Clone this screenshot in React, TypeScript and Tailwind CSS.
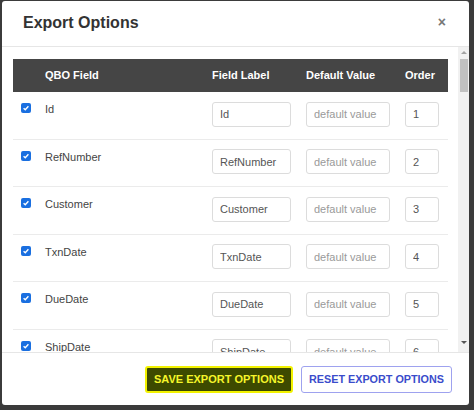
import React from "react";

type Field = { name: string; order: number };

const fields: Field[] = [
  { name: "Id", order: 1 },
  { name: "RefNumber", order: 2 },
  { name: "Customer", order: 3 },
  { name: "TxnDate", order: 4 },
  { name: "DueDate", order: 5 },
  { name: "ShipDate", order: 6 },
];

function Check() {
  return (
    <span className="mt-[2px] flex h-[10px] w-[10px] items-center justify-center rounded-[2px] bg-[#1a6fe0]">
      <svg viewBox="0 0 10 10" className="h-[8px] w-[8px]">
        <path d="M2 5.2 L4.1 7.2 L8 2.8" fill="none" stroke="white" strokeWidth="1.7" />
      </svg>
    </span>
  );
}

function FieldRow({ field }: { field: Field }) {
  return (
    <div className="grid h-[47.6px] shrink-0 grid-cols-[32px_167px_94px_99px_42px] border-b border-[#ebebeb] pt-[9px]">
      <div className="pl-[8px]">
        <Check />
      </div>
      <div className="pt-[1px] text-[11px] leading-[14px] text-[#444]">{field.name}</div>
      <div>
        <input
          readOnly
          value={field.name}
          className="h-[25px] w-[79px] rounded-[3px] border border-[#dcdcdc] px-[7px] text-[11px] text-[#555] outline-none"
        />
      </div>
      <div>
        <input
          readOnly
          placeholder="default value"
          className="h-[25px] w-[84px] rounded-[3px] border border-[#dcdcdc] px-[7px] text-[11px] text-[#555] outline-none placeholder:text-[#9a9a9a]"
        />
      </div>
      <div>
        <input
          readOnly
          value={field.order}
          className="h-[25px] w-[34px] rounded-[3px] border border-[#dcdcdc] px-[7px] text-[11px] text-[#555] outline-none"
        />
      </div>
    </div>
  );
}

export default function App() {
  return (
    <div
      className="h-[410px] w-[474px] overflow-hidden bg-[#3b3b3b] pl-[2px] pt-[1px]"
      style={{ fontFamily: '"Liberation Sans", Arial, sans-serif' }}
    >
      <div className="flex h-[404px] w-[467px] flex-col overflow-hidden rounded-[3px] bg-white">
        {/* header */}
        <div className="flex h-[46px] shrink-0 items-center justify-between border-b border-[#e6e6e6] pl-[21px] pr-[23px]">
          <h1 className="pb-[2px] text-[16px] font-bold text-[#333]">Export Options</h1>
          <span className="pb-[3px] text-[14px] font-bold leading-none text-[#777]">×</span>
        </div>

        {/* scrolling body */}
        <div className="flex min-h-0 flex-1">
          <div className="flex min-w-0 flex-1 flex-col overflow-hidden pl-[11px] pr-[10px] pt-[12px]">
            <div className="grid h-[33px] shrink-0 grid-cols-[32px_167px_94px_99px_42px] items-center bg-[#454545] text-[11px] font-bold text-white">
              <div />
              <div>QBO Field</div>
              <div>Field Label</div>
              <div>Default Value</div>
              <div>Order</div>
            </div>
            {fields.map((f) => (
              <FieldRow key={f.name} field={f} />
            ))}
          </div>
          <div className="flex w-[11px] shrink-0 flex-col items-center bg-[#f1f1f1] pt-[4px]">
            <span className="h-0 w-0 border-x-[3px] border-b-[3px] border-x-transparent border-b-[#a3a3a3]" />
            <div className="mt-[5px] h-[33px] w-[8px] bg-[#c1c1c1]" />
            <div className="flex-1" />
            <span className="mb-[8px] h-0 w-0 border-x-[3px] border-t-[3px] border-x-transparent border-t-[#555]" />
          </div>
        </div>

        {/* footer */}
        <div className="flex h-[53px] shrink-0 items-center justify-end gap-[8px] border-t border-[#e6e6e6] pr-[17px] pt-[1px]">
          <button className="h-[27px] w-[148px] rounded-[3px] border-2 border-[#f2f200] bg-[#3d4a00] text-[11px] font-bold text-[#f6f62a]">
            SAVE EXPORT OPTIONS
          </button>
          <button className="h-[27px] w-[151px] rounded-[3px] border border-[#9ea2ef] bg-white text-[10.8px] font-bold text-[#3a4ccb]">
            RESET EXPORT OPTIONS
          </button>
        </div>
      </div>
    </div>
  );
}
